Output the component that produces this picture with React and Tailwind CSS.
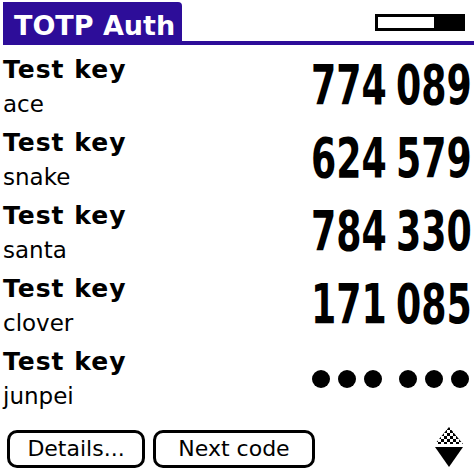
import React from "react";

const entries = [
  { label: "Test key", name: "ace", code: "774 089" },
  { label: "Test key", name: "snake", code: "624 579" },
  { label: "Test key", name: "santa", code: "784 330" },
  { label: "Test key", name: "clover", code: "171 085" },
  { label: "Test key", name: "junpei", code: null },
];

function HiddenCode() {
  return (
    <div className="flex gap-[17px] pt-[33px] pr-[5px]">
      {[0, 1].map((g) => (
        <div key={g} className="flex gap-[8px]">
          {[0, 1, 2].map((i) => (
            <span key={i} className="block w-[18px] h-[18px] rounded-full bg-black" />
          ))}
        </div>
      ))}
    </div>
  );
}

function Row({ entry }) {
  return (
    <div className="h-[73px] flex justify-between items-start">
      <div className="flex flex-col pl-[3px] pt-[12px]">
        <span className="text-[25px] leading-[26px] font-bold tracking-[1px] text-black">{entry.label}</span>
        <span className="mt-[9px] text-[23px] leading-[24px] text-black">{entry.name}</span>
      </div>
      {entry.code ? (
        <div className="pt-[13px] pr-[2px]">
          <span className="inline-block origin-right scale-x-[0.66] text-[55px] leading-[55px] font-bold text-black whitespace-nowrap [word-spacing:-5px]">
            {entry.code}
          </span>
        </div>
      ) : (
        <HiddenCode />
      )}
    </div>
  );
}

function ScrollArrows() {
  return (
    <svg width="28" height="40" viewBox="0 0 28 40" className="ml-auto mr-[11px] -mt-[3px]">
      <defs>
        <pattern id="dither" width="6" height="6" patternUnits="userSpaceOnUse">
          <rect x="0" y="0" width="3" height="3" fill="#000" />
          <rect x="3" y="3" width="3" height="3" fill="#000" />
        </pattern>
      </defs>
      <polygon points="14,0 28,17 0,17" fill="url(#dither)" />
      <polygon points="0,20 28,20 14,40" fill="#000" />
    </svg>
  );
}

export default function App() {
  return (
    <div className="w-[474px] h-[474px] bg-white overflow-hidden font-['DejaVu_Sans',sans-serif]">
      {/* title bar */}
      <div className="ml-[3px] pt-[2px] flex items-start border-b-[4px] border-[#2d0d99]">
        <div className="w-[179px] h-[39px] bg-[#2d0d99] rounded-tr-[4px] pl-[11px] pt-[10px]">
          <span className="block text-[27px] leading-[27px] font-bold text-white">TOTP Auth</span>
        </div>
        <div className="ml-auto mr-[9px] mt-[12px] w-[90px] h-[17px] border-[3px] border-black flex">
          <div className="flex-1 bg-white" />
          <div className="w-[28px] bg-black" />
        </div>
      </div>

      {entries.map((e, i) => (
        <Row key={i} entry={e} />
      ))}

      {/* buttons */}
      <div className="pt-[20px] pl-[7px] flex items-start gap-[8px]">
        <button className="w-[138px] h-[38px] border-[3px] border-black rounded-[10px] text-[22px] leading-none text-black flex items-center justify-center">
          Details...
        </button>
        <button className="w-[162px] h-[38px] border-[3px] border-black rounded-[10px] text-[22px] leading-none text-black flex items-center justify-center">
          Next code
        </button>
        <ScrollArrows />
      </div>
    </div>
  );
}
